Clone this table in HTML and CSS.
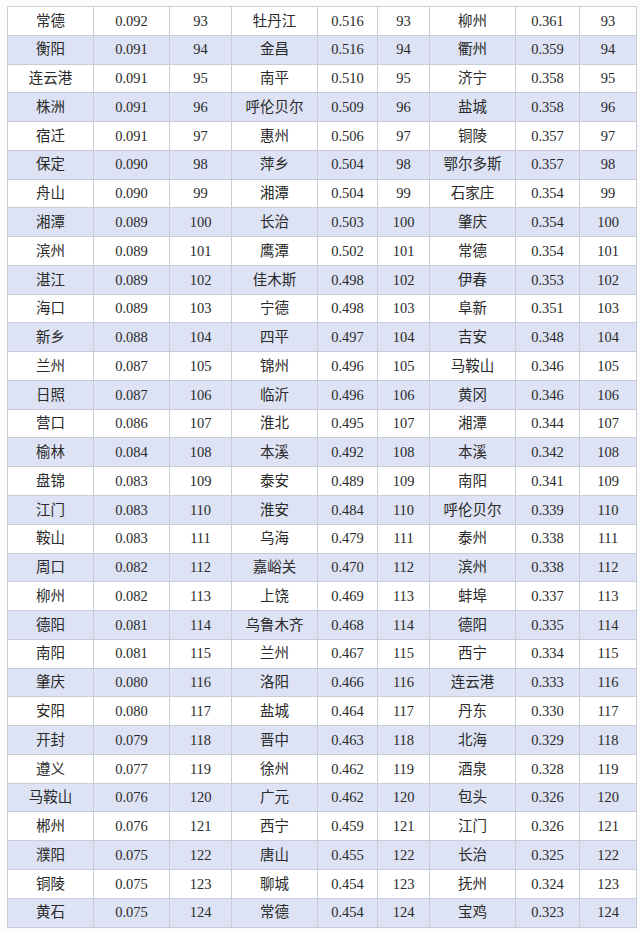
FILE: index.html
```html
<!DOCTYPE html>
<html lang="zh">
<head>
<meta charset="utf-8">
<link rel="stylesheet" href="styles.css">
</head>
<body>
<table class="rank">
<colgroup>
<col class="c1"><col class="c2"><col class="c3">
<col class="c4"><col class="c5"><col class="c6">
<col class="c7"><col class="c8"><col class="c9">
</colgroup>
<tbody>
<tr><td>常德</td><td>0.092</td><td>93</td><td>牡丹江</td><td>0.516</td><td>93</td><td>柳州</td><td>0.361</td><td>93</td></tr>
<tr><td>衡阳</td><td>0.091</td><td>94</td><td>金昌</td><td>0.516</td><td>94</td><td>衢州</td><td>0.359</td><td>94</td></tr>
<tr><td>连云港</td><td>0.091</td><td>95</td><td>南平</td><td>0.510</td><td>95</td><td>济宁</td><td>0.358</td><td>95</td></tr>
<tr><td>株洲</td><td>0.091</td><td>96</td><td>呼伦贝尔</td><td>0.509</td><td>96</td><td>盐城</td><td>0.358</td><td>96</td></tr>
<tr><td>宿迁</td><td>0.091</td><td>97</td><td>惠州</td><td>0.506</td><td>97</td><td>铜陵</td><td>0.357</td><td>97</td></tr>
<tr><td>保定</td><td>0.090</td><td>98</td><td>萍乡</td><td>0.504</td><td>98</td><td>鄂尔多斯</td><td>0.357</td><td>98</td></tr>
<tr><td>舟山</td><td>0.090</td><td>99</td><td>湘潭</td><td>0.504</td><td>99</td><td>石家庄</td><td>0.354</td><td>99</td></tr>
<tr><td>湘潭</td><td>0.089</td><td>100</td><td>长治</td><td>0.503</td><td>100</td><td>肇庆</td><td>0.354</td><td>100</td></tr>
<tr><td>滨州</td><td>0.089</td><td>101</td><td>鹰潭</td><td>0.502</td><td>101</td><td>常德</td><td>0.354</td><td>101</td></tr>
<tr><td>湛江</td><td>0.089</td><td>102</td><td>佳木斯</td><td>0.498</td><td>102</td><td>伊春</td><td>0.353</td><td>102</td></tr>
<tr><td>海口</td><td>0.089</td><td>103</td><td>宁德</td><td>0.498</td><td>103</td><td>阜新</td><td>0.351</td><td>103</td></tr>
<tr><td>新乡</td><td>0.088</td><td>104</td><td>四平</td><td>0.497</td><td>104</td><td>吉安</td><td>0.348</td><td>104</td></tr>
<tr><td>兰州</td><td>0.087</td><td>105</td><td>锦州</td><td>0.496</td><td>105</td><td>马鞍山</td><td>0.346</td><td>105</td></tr>
<tr><td>日照</td><td>0.087</td><td>106</td><td>临沂</td><td>0.496</td><td>106</td><td>黄冈</td><td>0.346</td><td>106</td></tr>
<tr><td>营口</td><td>0.086</td><td>107</td><td>淮北</td><td>0.495</td><td>107</td><td>湘潭</td><td>0.344</td><td>107</td></tr>
<tr><td>榆林</td><td>0.084</td><td>108</td><td>本溪</td><td>0.492</td><td>108</td><td>本溪</td><td>0.342</td><td>108</td></tr>
<tr><td>盘锦</td><td>0.083</td><td>109</td><td>泰安</td><td>0.489</td><td>109</td><td>南阳</td><td>0.341</td><td>109</td></tr>
<tr><td>江门</td><td>0.083</td><td>110</td><td>淮安</td><td>0.484</td><td>110</td><td>呼伦贝尔</td><td>0.339</td><td>110</td></tr>
<tr><td>鞍山</td><td>0.083</td><td>111</td><td>乌海</td><td>0.479</td><td>111</td><td>泰州</td><td>0.338</td><td>111</td></tr>
<tr><td>周口</td><td>0.082</td><td>112</td><td>嘉峪关</td><td>0.470</td><td>112</td><td>滨州</td><td>0.338</td><td>112</td></tr>
<tr><td>柳州</td><td>0.082</td><td>113</td><td>上饶</td><td>0.469</td><td>113</td><td>蚌埠</td><td>0.337</td><td>113</td></tr>
<tr><td>德阳</td><td>0.081</td><td>114</td><td>乌鲁木齐</td><td>0.468</td><td>114</td><td>德阳</td><td>0.335</td><td>114</td></tr>
<tr><td>南阳</td><td>0.081</td><td>115</td><td>兰州</td><td>0.467</td><td>115</td><td>西宁</td><td>0.334</td><td>115</td></tr>
<tr><td>肇庆</td><td>0.080</td><td>116</td><td>洛阳</td><td>0.466</td><td>116</td><td>连云港</td><td>0.333</td><td>116</td></tr>
<tr><td>安阳</td><td>0.080</td><td>117</td><td>盐城</td><td>0.464</td><td>117</td><td>丹东</td><td>0.330</td><td>117</td></tr>
<tr><td>开封</td><td>0.079</td><td>118</td><td>晋中</td><td>0.463</td><td>118</td><td>北海</td><td>0.329</td><td>118</td></tr>
<tr><td>遵义</td><td>0.077</td><td>119</td><td>徐州</td><td>0.462</td><td>119</td><td>酒泉</td><td>0.328</td><td>119</td></tr>
<tr><td>马鞍山</td><td>0.076</td><td>120</td><td>广元</td><td>0.462</td><td>120</td><td>包头</td><td>0.326</td><td>120</td></tr>
<tr><td>郴州</td><td>0.076</td><td>121</td><td>西宁</td><td>0.459</td><td>121</td><td>江门</td><td>0.326</td><td>121</td></tr>
<tr><td>濮阳</td><td>0.075</td><td>122</td><td>唐山</td><td>0.455</td><td>122</td><td>长治</td><td>0.325</td><td>122</td></tr>
<tr><td>铜陵</td><td>0.075</td><td>123</td><td>聊城</td><td>0.454</td><td>123</td><td>抚州</td><td>0.324</td><td>123</td></tr>
<tr><td>黄石</td><td>0.075</td><td>124</td><td>常德</td><td>0.454</td><td>124</td><td>宝鸡</td><td>0.323</td><td>124</td></tr>
</tbody>
</table>
</body>
</html>
```
FILE: styles.css
```css
html, body {
  margin: 0;
  background: #fcfcfc;
}
body {
  padding: 6px 0 0 7px;
}
.rank {
  border-collapse: collapse;
  table-layout: fixed;
  width: 629px;
  font-family: "Liberation Serif", "Noto Sans CJK SC", serif;
  font-size: 14.5px;
  color: #2a2a2a;
  background: #ffffff;
}
.c1 { width: 86px; }
.c2 { width: 76px; }
.c3 { width: 62px; }
.c4 { width: 86px; }
.c5 { width: 60px; }
.c6 { width: 52px; }
.c7 { width: 86px; }
.c8 { width: 64px; }
.c9 { width: 57px; }
.rank td {
  border: 1px solid #c9ccd4;
  height: 27.78px;
  padding: 0;
  text-align: center;
  vertical-align: middle;
  line-height: 1;
  white-space: nowrap;
}
.rank tr:nth-child(even) td {
  background: #dde3f4;
}
```
